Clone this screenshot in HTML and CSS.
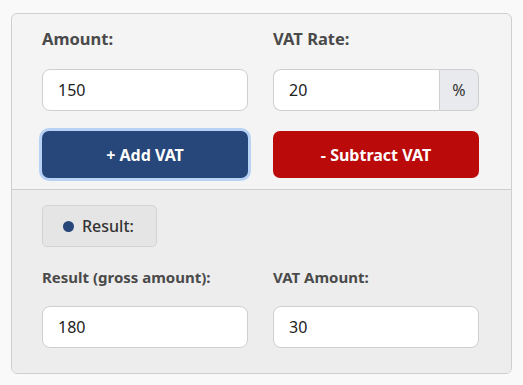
FILE: index.html
```html
<!DOCTYPE html>
<html lang="en">

<head>
    <meta charset="UTF-8">
    <meta name="viewport" content="width=device-width, initial-scale=1.0">
    <title>VAT Calculator</title>
    <link rel="stylesheet" href="styles.css">
</head>

<body>
    <div class="calc">
        <div class="calc-top">
            <div class="field">
                <label class="field-label" for="amount">Amount:</label>
                <input class="field-input" id="amount" type="text" value="150">
            </div>
            <div class="field">
                <label class="field-label" for="rate">VAT Rate:</label>
                <div class="input-group">
                    <input class="field-input" id="rate" type="text" value="20">
                    <span class="input-addon">%</span>
                </div>
            </div>
            <button class="btn btn-add">+ Add VAT</button>
            <button class="btn btn-sub">- Subtract VAT</button>
        </div>

        <div class="calc-bottom">
            <div class="result-badge"><span class="dot"></span>Result:</div>
            <div class="result-grid">
                <div class="field">
                    <label class="field-label small" for="gross">Result (gross amount):</label>
                    <input class="field-input" id="gross" type="text" value="180">
                </div>
                <div class="field">
                    <label class="field-label small" for="vat">VAT Amount:</label>
                    <input class="field-input" id="vat" type="text" value="30">
                </div>
            </div>
        </div>
    </div>
</body>

</html>
```

FILE: styles.css
```css
* {
    box-sizing: border-box;
    margin: 0;
    padding: 0;
}

body {
    background-color: #f9f9f9;
    font-family: "Segoe UI", "Noto Sans", "Open Sans", sans-serif;
    color: #333;
    padding: 13px 11px 11px 11px;
}

.calc {
    width: 501px;
    border: 1px solid #cfcfcf;
    border-radius: 6px;
    overflow: hidden;
    background-color: #f4f4f4;
}

.calc-top {
    display: grid;
    grid-template-columns: 206px 206px;
    column-gap: 25px;
    row-gap: 20px;
    padding: 13px 30px 11px 30px;
}

.field {
    display: flex;
    flex-direction: column;
}

.field-label {
    font-family: "Noto Sans", sans-serif;
    font-weight: bold;
    font-size: 16.5px;
    line-height: 24px;
    color: #4a4a4a;
    margin-bottom: 18px;
}

.field-label.small {
    font-size: 15px;
    margin-bottom: 17px;
}

.field-input {
    height: 42px;
    width: 100%;
    border: 1px solid #cfcfcf;
    border-radius: 8px;
    background: #fff;
    padding: 0 15px;
    font-family: "Segoe UI", "Noto Sans", "Open Sans", sans-serif;
    font-size: 16px;
    color: #222;
    outline: none;
}

.input-group {
    display: flex;
}

.input-group .field-input {
    border-radius: 8px 0 0 8px;
    border-right: none;
}

.input-addon {
    width: 40px;
    flex-shrink: 0;
    height: 42px;
    display: flex;
    align-items: center;
    justify-content: center;
    background-color: #e8eaed;
    border: 1px solid #cfcfcf;
    border-radius: 0 8px 8px 0;
    font-size: 16px;
    color: #333;
}

.btn {
    height: 47px;
    border: none;
    border-radius: 7px;
    color: #fff;
    font-family: "Noto Sans", sans-serif;
    font-weight: bold;
    font-size: 16px;
    cursor: pointer;
}

.btn-add {
    background-color: #27477a;
    box-shadow: 0 0 0 3px #b8d2f6;
}

.btn-sub {
    background-color: #bb0a0a;
}

.calc-bottom {
    background-color: #ededed;
    border-top: 1px solid #cfcfcf;
    padding: 15px 30px 25px 30px;
}

.result-badge {
    display: inline-flex;
    align-items: center;
    width: 115px;
    height: 42px;
    padding-left: 20px;
    background-color: #e5e5e5;
    border: 1px solid #d3d3d3;
    border-radius: 5px;
    font-family: "Noto Sans", sans-serif;
    font-weight: 500;
    font-size: 16px;
    color: #333;
}

.dot {
    width: 11px;
    height: 11px;
    border-radius: 50%;
    background-color: #27477a;
    margin-right: 8px;
}

.result-grid {
    display: grid;
    grid-template-columns: 206px 206px;
    column-gap: 25px;
    margin-top: 18px;
}
```
